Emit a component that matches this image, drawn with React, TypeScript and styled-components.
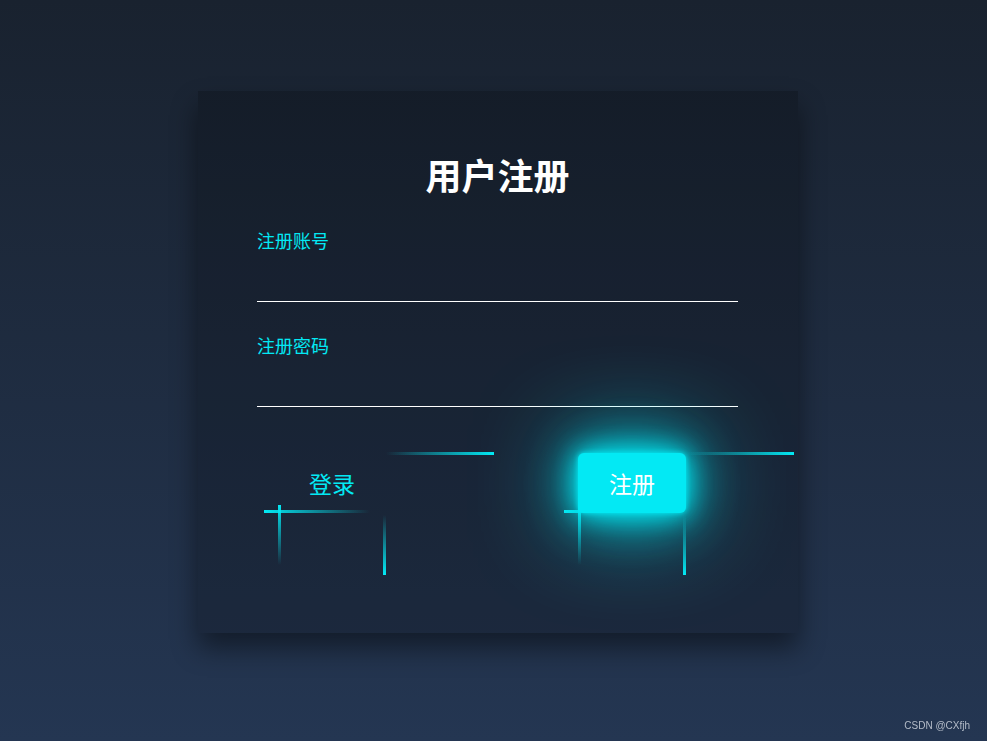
import styled, { createGlobalStyle } from "styled-components"

const GlobalStyle = createGlobalStyle`
  html, body {
    margin: 0;
    padding: 0;
  }
  body {
    min-height: 741px;
    background: linear-gradient(#19222f, #243652);
    font-family: "Noto Sans CJK SC", "Noto Sans", sans-serif;
  }
`

const cyan = "#03e9f4"

export default function App() {
    return (
        <>
            <GlobalStyle />
            <Page>
                <Card>
                    <Title>用户注册</Title>
                    <Field>
                        <Label htmlFor="acc">注册账号</Label>
                        <Input id="acc" type="text" />
                    </Field>
                    <Field>
                        <Label htmlFor="pwd">注册密码</Label>
                        <Input id="pwd" type="password" />
                    </Field>
                    <Actions>
                        <NeonButton>
                            <Line $side="top" />
                            <Line $side="right" />
                            <Line $side="bottom" />
                            <Line $side="left" />
                            登录
                        </NeonButton>
                        <NeonButton $active>
                            <Line $side="top" />
                            <Line $side="right" />
                            <Line $side="bottom" />
                            <Line $side="left" />
                            注册
                        </NeonButton>
                    </Actions>
                </Card>
            </Page>
            <Watermark>CSDN @CXfjh</Watermark>
        </>
    )
}

const Page = styled.div`
    padding: 91px 0 0 198px;
`

const Card = styled.div`
    width: 600px;
    box-sizing: border-box;
    padding: 61px 60px 120px 59px;
    background: rgba(0, 0, 0, 0.2);
    box-shadow: 0 15px 25px rgba(0, 0, 0, 0.45);
`

const Title = styled.h2`
    margin: 0 0 34px;
    text-align: center;
    color: #fff;
    font-size: 36px;
    line-height: 44px;
    font-weight: 700;
`

const Field = styled.div`
    display: flex;
    flex-direction: column;
    margin-bottom: 33px;
`

const Label = styled.label`
    color: ${cyan};
    font-size: 18px;
    line-height: 20px;
`

const Input = styled.input`
    height: 52px;
    box-sizing: border-box;
    padding: 10px 0;
    border: none;
    border-bottom: 1px solid #fff;
    background: transparent;
    outline: none;
    color: #fff;
    font-size: 16px;
`

const Actions = styled.div`
    display: flex;
    gap: 192px;
    padding-left: 21px;
    margin-top: 46px;
`

const NeonButton = styled.a<{ $active?: boolean }>`
    position: relative;
    display: block;
    width: 108px;
    height: 60px;
    line-height: 60px;
    text-align: center;
    font-size: 23px;
    border-radius: 6px;
    cursor: pointer;
    color: ${p => (p.$active ? "#fff" : cyan)};
    background: ${p => (p.$active ? cyan : "transparent")};
    box-shadow: ${p =>
        p.$active
            ? `0 0 5px ${cyan}, 0 0 25px ${cyan}, 0 0 50px ${cyan}, 0 0 100px ${cyan}`
            : "none"};
`

const lineStyles = {
    top: `top: -1px; left: 108px; width: 108px; height: 3px; background: linear-gradient(90deg, transparent, ${cyan});`,
    right: `top: 62px; right: 0; width: 3px; height: 60px; background: linear-gradient(180deg, transparent, ${cyan});`,
    bottom: `bottom: 0; left: -14px; width: 106px; height: 3px; background: linear-gradient(270deg, transparent, ${cyan});`,
    left: `top: 52px; left: 0; width: 3px; height: 60px; background: linear-gradient(0deg, transparent, ${cyan});`,
}

const Line = styled.span<{ $side: keyof typeof lineStyles }>`
    position: absolute;
    display: block;
    ${p => lineStyles[p.$side]}
`

const Watermark = styled.div`
    position: fixed;
    right: 17px;
    bottom: 10px;
    color: #b4bcc8;
    font-family: "Liberation Sans", Arial, sans-serif;
    font-size: 10px;
`
